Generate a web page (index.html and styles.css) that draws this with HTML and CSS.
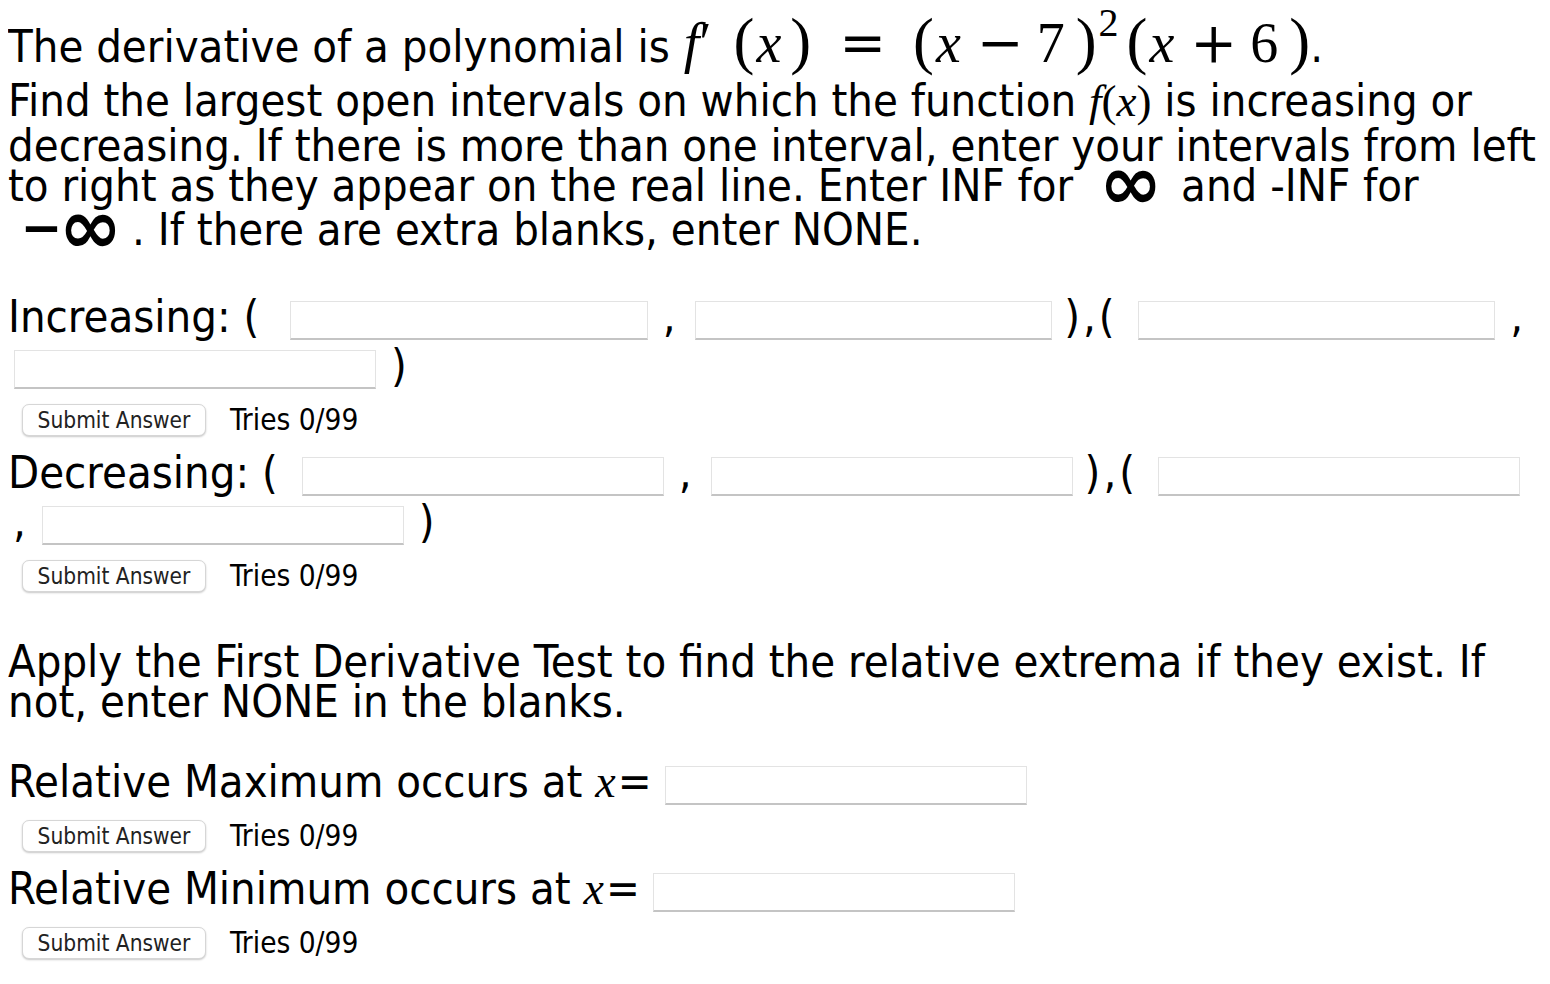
FILE: index.html
```html
<!DOCTYPE html>
<html lang="en">
<head>
<meta charset="utf-8">
<title>First Derivative Test</title>
<link rel="stylesheet" href="styles.css">
</head>
<body>
<div class="problem">
  <p class="intro">The derivative of a polynomial is <span class="math big"><i class="mf">f</i><span class="prime">′</span><span class="po">(</span><i class="mx">x</i><span class="pc">)</span><span class="rel">=</span><span class="po">(</span><i class="mx">x</i><span class="bin">−</span>7<span class="pc pn">)</span><sup class="sup">2</sup><span class="po">(</span><i class="mx">x</i><span class="bin">+</span>6<span class="pc pn">)</span></span>.<br>Find the largest open intervals on which the function <span class="math small"><i class="mf">f</i>(<i class="mi">x</i>)</span> is increasing or<br>decreasing. If there is more than one interval, enter your intervals from left<br>to right as they appear on the real line. Enter INF for &nbsp;<span class="inf">∞</span> and -INF for<br>&nbsp;<span class="neginf"><span class="neg">−</span><span class="inf">∞</span></span>. If there are extra blanks, enter NONE.</p>

  <div class="answer">
    <div class="line">
      <span class="txt open">Increasing: (</span>
      <input class="blank" type="text">
      <span class="txt sep">,</span>
      <input class="blank" type="text">
      <span class="txt mid">),(</span>
      <input class="blank" type="text">
      <span class="txt sep">,</span>
    </div>
    <div class="line">
      <input class="blank first" type="text">
      <span class="txt sep">)</span>
    </div>
    <div class="submit-row">
      <button class="submit" type="button">Submit Answer</button>
      <span class="tries">Tries 0/99</span>
    </div>
  </div>

  <div class="answer">
    <div class="line">
      <span class="txt open open-dec">Decreasing: (</span>
      <input class="blank" type="text">
      <span class="txt sep">,</span>
      <input class="blank" type="text">
      <span class="txt mid">),(</span>
      <input class="blank" type="text">
    </div>
    <div class="line">
      <span class="txt lead">,</span>
      <input class="blank" type="text">
      <span class="txt sep">)</span>
    </div>
    <div class="submit-row">
      <button class="submit" type="button">Submit Answer</button>
      <span class="tries">Tries 0/99</span>
    </div>
  </div>

  <p class="instr">Apply the First Derivative Test to find the relative extrema if they exist. If<br>not, enter NONE in the blanks.</p>

  <div class="answer">
    <div class="line">
      <span class="txt eq">Relative Maximum occurs at <i class="vx">x</i>=</span>
      <input class="blank" type="text">
    </div>
    <div class="submit-row">
      <button class="submit" type="button">Submit Answer</button>
      <span class="tries">Tries 0/99</span>
    </div>
  </div>

  <div class="answer">
    <div class="line">
      <span class="txt eq">Relative Minimum occurs at <i class="vx">x</i>=</span>
      <input class="blank" type="text">
    </div>
    <div class="submit-row">
      <button class="submit" type="button">Submit Answer</button>
      <span class="tries">Tries 0/99</span>
    </div>
  </div>
</div>
</body>
</html>
```

FILE: styles.css
```css
html, body {
  background: #ffffff;
}

body {
  margin: 8px;
  color: #000000;
  font-family: "DejaVu Sans Condensed", "DejaVu Sans", sans-serif;
  font-stretch: condensed;
  font-size: 45px;
  line-height: 40px;
}

.problem {
  width: 1534px;
}

p {
  margin: 0;
}

.intro {
  padding-top: 13px;
  margin-bottom: 46px;
  white-space: nowrap;
}

/* inline math */
.math {
  font-family: "Liberation Serif", "DejaVu Serif", serif;
  font-stretch: normal;
  display: inline-block;
  line-height: 40px;
}

.math.big {
  font-size: 56px;
  margin-left: 1px;
  margin-right: 0;
  padding-bottom: 18px;
}

.math.small {
  font-size: 45px;
  padding-bottom: 5px;
}

.mf,
.mi,
.mx {
  font-style: italic;
}

.mx {
  margin: 0 9px 0 2px;
}

.prime {
  margin-right: 22px;
}

.po,
.pc {
  font-size: 1.12em;
}

.pc.pn {
  margin-left: 11px;
}

.rel,
.bin {
  font-family: "DejaVu Serif", serif;
}

.rel {
  margin: 0 27px 0 28px;
}

.bin {
  margin: 0 13px 0 7px;
}

.sup {
  font-size: 40px;
  vertical-align: 26px;
  line-height: 0;
  margin: 0 8px 0 2px;
}

.neginf {
  display: inline-block;
  padding-top: 4px;
  margin-right: 6px;
}

.neg {
  font-family: "DejaVu Sans", sans-serif;
  font-stretch: normal;
  font-weight: bold;
  font-size: 50px;
  line-height: 0;
  margin-right: -4px;
}

.inf {
  font-family: "DejaVu Sans", sans-serif;
  font-stretch: normal;
  font-weight: bold;
  font-size: 76px;
  line-height: 0;
  vertical-align: -0.1em;
  margin-right: 6px;
}

.neginf .inf {
  margin-right: 4px;
}

/* answer blocks */
.answer {
  display: flex;
  flex-direction: column;
}

.line {
  display: flex;
  align-items: center;
  height: 49px;
}

.txt {
  white-space: pre;
  padding-bottom: 8px;
}

.open {
  margin-right: 31px;
}

.open.open-dec {
  margin-right: 24px;
}

.eq {
  margin-right: 13px;
}

.sep {
  margin: 0 19px 0 15px;
}

.mid {
  margin: 0 20px 0 12px;
  letter-spacing: 3px;
}

.lead {
  margin: 0 16px 0 5px;
}

.vx {
  font-family: "Liberation Serif", serif;
  font-style: italic;
  font-size: 46px;
  margin-right: 2px;
}

.blank {
  box-sizing: border-box;
  width: 362px;
  height: 39px;
  margin: 0;
  padding: 0 8px;
  background: #ffffff;
  border: 1px solid #e3e3e3;
  border-bottom: 2px solid #c4c4c4;
  border-radius: 0;
  font-size: 20px;
  outline: none;
}

.blank.first {
  margin-left: 6px;
}

.submit-row {
  display: flex;
  align-items: center;
  padding: 10px 0 16px 14px;
}

.submit {
  box-sizing: border-box;
  width: 184px;
  height: 32px;
  padding: 0;
  background: #ffffff;
  border: 1px solid #d6d6d6;
  border-radius: 7px;
  box-shadow: 0 1px 2px rgba(0, 0, 0, 0.22);
  color: #222222;
  font-family: "DejaVu Sans Condensed", "DejaVu Sans", sans-serif;
  font-stretch: condensed;
  font-size: 22.5px;
  line-height: 30px;
}

.tries {
  margin-left: 24px;
  font-size: 29.5px;
  line-height: 32px;
}

.instr {
  margin-top: 34px;
  margin-bottom: 39px;
}
```
